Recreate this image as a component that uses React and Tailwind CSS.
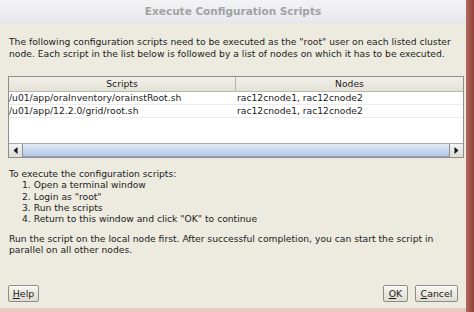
function Btn({ mnemonic, rest, className }) {
  return (
    <button
      type="button"
      className={`flex h-[17px] items-center justify-center rounded-[2px] border border-[#8e8c86] bg-gradient-to-b from-[#f7f6f2] to-[#dedbd1] text-[9.4px] leading-none text-[#1a1a1a] shadow-[inset_0_1px_0_#ffffff] ${className}`}
    >
      <span className="underline underline-offset-1">{mnemonic}</span>
      {rest}
    </button>
  );
}

const rows = [
  ['/u01/app/oraInventory/orainstRoot.sh', 'rac12cnode1, rac12cnode2'],
  ['/u01/app/12.2.0/grid/root.sh', 'rac12cnode1, rac12cnode2'],
];

const steps = [
  'Open a terminal window',
  'Login as "root"',
  'Run the scripts',
  'Return to this window and click "OK" to continue',
];

export default function App() {
  return (
    <div
      className="relative flex h-[312px] w-[474px] overflow-hidden bg-[#e7c9c1]"
      style={{ fontFamily: '"DejaVu Sans", Verdana, sans-serif' }}
    >
      <div className="flex h-[308px] w-[466px] flex-col bg-[#edeadf] text-[9.2px] leading-[11.6px] text-[#1c1c1c]">
        <div className="flex h-[24px] items-center justify-center bg-gradient-to-b from-[#f3f3f5] to-[#e8e8eb] text-[10.5px] font-bold text-[#a2a2a4]">
          Execute Configuration Scripts
        </div>

        <p className="mt-[12px] px-[9px]">
          The following configuration scripts need to be executed as the "root" user on each listed cluster
          node. Each script in the list below is followed by a list of nodes on which it has to be executed.
        </p>

        <div className="ml-[8px] mt-[17px] flex h-[82px] w-[456px] flex-col border border-[#8f8d86] bg-white">
          <div className="flex h-[15px] border-b border-[#b9b6ac] bg-gradient-to-b from-[#f2f0ea] to-[#e4e1d7]">
            <div className="flex w-[227px] items-center justify-center border-r border-[#b9b6ac]">Scripts</div>
            <div className="flex flex-1 items-center justify-center">Nodes</div>
          </div>
          {rows.map(([script, nodes]) => (
            <div key={script} className="flex h-[13px] items-center border-b border-[#ececec]">
              <div className="w-[227px] pl-[0px]">{script}</div>
              <div className="flex-1 pl-[1px]">{nodes}</div>
            </div>
          ))}
          <div className="flex-1" />
          <div className="flex h-[14px] border-t border-[#a9a9a9]">
            <div className="flex w-[14px] items-center justify-center border-r border-[#8d8d8d] bg-gradient-to-b from-[#f4f4f4] to-[#dcdcdc]">
              <svg width="5" height="7" viewBox="0 0 5 7">
                <path d="M4.5 0 L0.5 3.5 L4.5 7 Z" fill="#111" />
              </svg>
            </div>
            <div className="flex flex-1 items-center justify-center border-b border-[#8ea6c7] bg-gradient-to-b from-[#e3ecf7] via-[#c7d8ee] to-[#b3c8e4]">
              <div className="h-[8px] w-[10px] bg-[radial-gradient(#8aa2c4_0.6px,transparent_0.7px)] bg-[length:2px_2px]" />
            </div>
            <div className="flex w-[14px] items-center justify-center border-l border-[#8d8d8d] bg-gradient-to-b from-[#f4f4f4] to-[#dcdcdc]">
              <svg width="5" height="7" viewBox="0 0 5 7">
                <path d="M0.5 0 L4.5 3.5 L0.5 7 Z" fill="#111" />
              </svg>
            </div>
          </div>
        </div>

        <div className="mt-[10px] px-[9px] leading-[11.3px]">
          <p>To execute the configuration scripts:</p>
          <ol className="pl-[13px]">
            {steps.map((s, i) => (
              <li key={s} className="whitespace-pre">
                {`${i + 1}. ${s}`}
              </li>
            ))}
          </ol>
        </div>

        <p className="mt-[8px] px-[9px]">
          Run the script on the local node first. After successful completion, you can start the script in
          parallel on all other nodes.
        </p>

        <div className="mt-auto mb-[6px] flex items-center px-[8px]">
          <Btn mnemonic="H" rest="elp" className="w-[31px]" />
          <div className="flex-1" />
          <Btn mnemonic="O" rest="K" className="w-[25px]" />
          <Btn mnemonic="C" rest="ancel" className="ml-[7px] w-[43px]" />
        </div>
      </div>
      <div className="flex-1 bg-gradient-to-r from-[#b36b60] to-[#8f3f36]" />
    </div>
  );
}
